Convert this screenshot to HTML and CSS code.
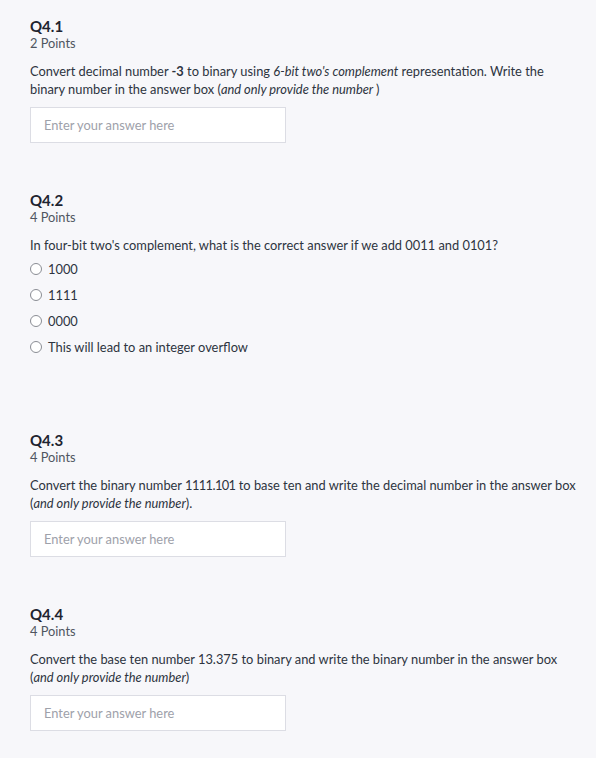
FILE: index.html
```html
<!DOCTYPE html>
<html>
<head>
<meta charset="utf-8">
<link rel="stylesheet" href="styles.css">
</head>
<body>
<main class="page">
  <section class="question">
    <h2 class="q-title">Q4.1</h2>
    <div class="q-points">2 Points</div>
    <p class="q-text">Convert decimal number <b>-3</b> to binary using <i>6-bit two's complement</i> representation. Write the binary number in the answer box (<i>and only provide the number </i>)</p>
    <div class="answer">Enter your answer here</div>
  </section>

  <section class="question q-with-options">
    <h2 class="q-title">Q4.2</h2>
    <div class="q-points">4 Points</div>
    <p class="q-text">In four-bit two's complement, what is the correct answer if we add 0011 and 0101?</p>
    <ul class="options">
      <li class="option"><span class="radio"></span>1000</li>
      <li class="option"><span class="radio"></span>1111</li>
      <li class="option"><span class="radio"></span>0000</li>
      <li class="option"><span class="radio"></span>This will lead to an integer overflow</li>
    </ul>
  </section>

  <section class="question">
    <h2 class="q-title">Q4.3</h2>
    <div class="q-points">4 Points</div>
    <p class="q-text">Convert the binary number <span class="num">1111.101</span> to base ten and write the decimal number in the answer box (<i>and only provide the number</i>).</p>
    <div class="answer">Enter your answer here</div>
  </section>

  <section class="question">
    <h2 class="q-title">Q4.4</h2>
    <div class="q-points">4 Points</div>
    <p class="q-text">Convert the base ten number 13.375 to binary and write the binary number in the answer box (<i>and only provide the number</i>)</p>
    <div class="answer">Enter your answer here</div>
  </section>
</main>
</body>
</html>
```

FILE: styles.css
```css
html, body {
  margin: 0;
  padding: 0;
  background: #f7f7fa;
}
body {
  font-family: Lato, "Open Sans", sans-serif;
  color: #2d3440;
  font-size: 12.85px;
}
.page {
  padding: 16.5px 18px 0 30px;
  width: 548px;
}
.question {
  margin-bottom: 47.5px;
}
.q-with-options {
  margin-bottom: 70.5px;
}
.q-title {
  margin: 0;
  font-size: 15px;
  font-weight: 700;
  line-height: 18px;
  color: #1e2430;
}
.q-points {
  font-size: 12.8px;
  line-height: 17px;
  color: #4f5560;
}
.q-text {
  margin: 10.5px 0 0 0;
  line-height: 18px;
}
.q-text b { font-weight: 700; }
.num { letter-spacing: -0.6px; }
.answer {
  box-sizing: border-box;
  margin-top: 9px;
  width: 256px;
  height: 36px;
  padding: 0 13px;
  border: 1px solid #dcdde4;
  background: #fff;
  color: #9ea1aa;
  line-height: 34px;
  font-size: 12.85px;
}
.options {
  list-style: none;
  margin: 2px 0 0 0;
  padding: 0;
}
.option {
  display: flex;
  align-items: center;
  height: 26px;
}
.radio {
  box-sizing: border-box;
  width: 12px;
  height: 12px;
  border: 1.5px solid #8a8d94;
  border-radius: 50%;
  margin: 0 6px 0 0;
  background: #fff;
}
```
